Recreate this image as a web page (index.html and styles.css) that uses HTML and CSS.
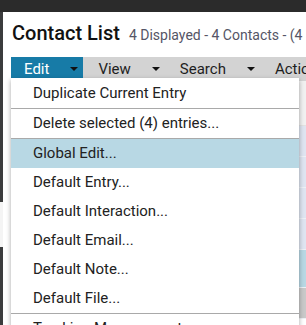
FILE: index.html
```html
<!DOCTYPE html>
<html lang="en">
<head>
    <meta charset="UTF-8">
    <meta name="viewport" content="width=device-width, initial-scale=1.0">
    <title>Contact List</title>
    <link rel="stylesheet" href="styles.css">
</head>
<body>
    <div class="topbar"></div>
    <div class="layout">
        <div class="side-strip">
            <div class="strip-dark"></div>
            <div class="strip-light"></div>
            <div class="strip-dark grow"></div>
        </div>
        <div class="main">
            <div class="header">
                <h1>Contact List</h1>
                <span class="counts">4 Displayed - 4 Contacts - (4 Selected)</span>
            </div>
            <div class="menubar">
                <div class="menu-item active">Edit <span class="caret"></span></div>
                <div class="menu-item">View <span class="caret"></span></div>
                <div class="menu-item">Search <span class="caret"></span></div>
                <div class="menu-item">Actions <span class="caret"></span></div>
            </div>
            <div class="table">
                <div class="row head"></div>
                <div class="row"></div>
                <div class="row"></div>
                <div class="row"></div>
                <div class="row"></div>
                <div class="row selected"></div>
                <div class="row foot"></div>
            </div>

            <div class="dropdown">
                <div class="dd-item">Duplicate Current Entry</div>
                <div class="dd-sep"></div>
                <div class="dd-item">Delete selected (4) entries...</div>
                <div class="dd-sep"></div>
                <div class="dd-item hover">Global Edit...</div>
                <div class="dd-item">Default Entry...</div>
                <div class="dd-item">Default Interaction...</div>
                <div class="dd-item">Default Email...</div>
                <div class="dd-item">Default Note...</div>
                <div class="dd-item">Default File...</div>
                <div class="dd-sep"></div>
                <div class="dd-item">Tracking Management...</div>
            </div>
        </div>
    </div>
</body>
</html>
```

FILE: styles.css
```css
/* page */
body {
    margin: 0;
    font-family: Roboto, "Liberation Sans", sans-serif;
    background-color: #2d2d2d;
    height: 325px;
    overflow: hidden;
}
.topbar {
    height: 12px;
    background-color: #2b2b2b;
}
.layout {
    display: flex;
    height: 313px;
}
.side-strip {
    width: 3px;
    display: flex;
    flex-direction: column;
}
.strip-dark {
    height: 190px;
    background-color: #3b3c3d;
}
.strip-dark.grow {
    flex: 1;
}
.strip-light {
    height: 45px;
    background-color: #f4f4f4;
}
.main {
    flex: 1;
    position: relative;
    background-color: #fff;
    padding: 9px 0 0 8px;
    overflow: hidden;
}

/* header */
.header {
    display: flex;
    align-items: baseline;
    white-space: nowrap;
    height: 24px;
    margin-bottom: 12px;
}
.header h1 {
    margin: 0 0 0 1px;
    font-size: 20px;
    font-weight: 500;
    line-height: 24px;
    color: #111;
}
.counts {
    margin-left: 9px;
    font-size: 14px;
    color: #555566;
}

/* menu bar */
.menubar {
    display: flex;
    height: 24px;
    background-color: #d3d3d3;
    white-space: nowrap;
}
.menu-item {
    display: flex;
    align-items: center;
    padding: 0 5px 0 13px;
    font-size: 15px;
    line-height: 24px;
    color: #1e1e1e;
}
.menu-item + .menu-item {
    padding-left: 15px;
}
.menu-item.active {
    background-color: #177ba7;
    color: #fff;
}
.caret {
    width: 0;
    height: 0;
    margin-left: 21px;
    border-left: 4px solid transparent;
    border-right: 4px solid transparent;
    border-top: 4px solid #111;
}

/* table behind the menu */
.table {
    display: flex;
    flex-direction: column;
}
.row {
    height: 30px;
    background-color: #dfe5f1;
    border-bottom: 1px solid #eef1f6;
}
.row.head {
    height: 44px;
    background-color: #f1f1f1;
    border-bottom: 1px solid #e2e2e2;
}
.row.selected {
    height: 37px;
    background-color: #b8d8e4;
}
.row.foot {
    height: 30px;
    background-color: #c9c9c9;
}

/* dropdown */
.dropdown {
    position: absolute;
    top: 66px;
    left: 8px;
    width: 288px;
    padding-top: 1px;
    background-color: #fff;
    box-shadow: 0 2px 5px rgba(0,0,0,0.35);
}
.dd-item {
    height: 29px;
    line-height: 29px;
    padding-left: 22px;
    font-size: 15px;
    color: #222;
    white-space: nowrap;
}
.dd-item.hover {
    background-color: #b8d8e4;
}
.dd-sep {
    height: 1px;
    background-color: #a9a9a9;
}
```
